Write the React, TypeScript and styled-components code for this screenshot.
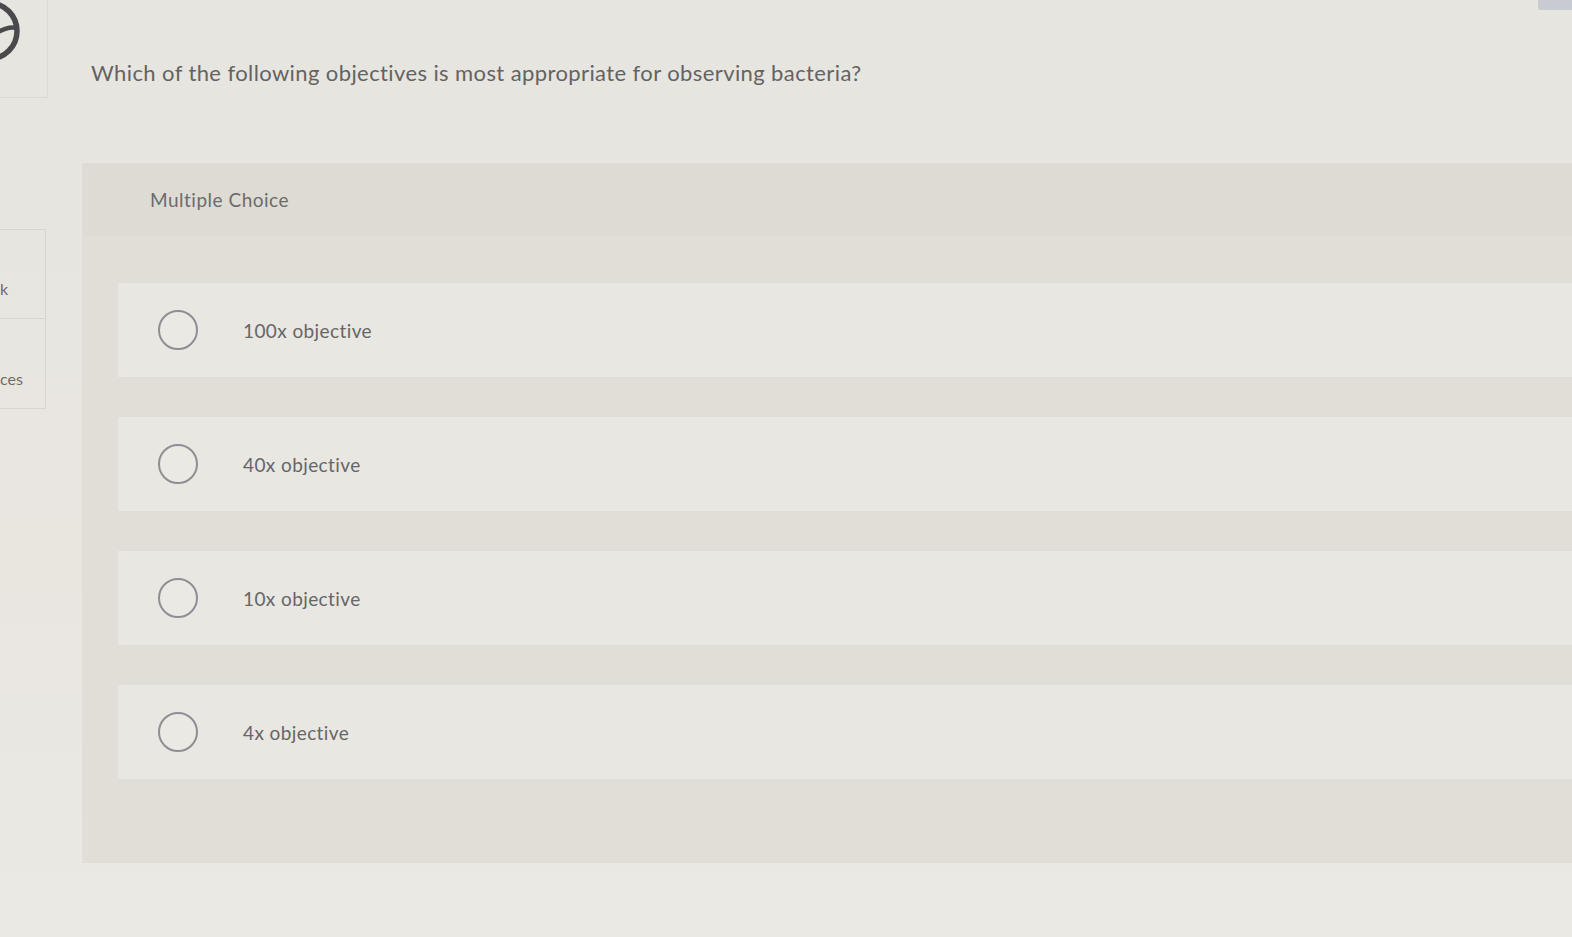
import styled, { createGlobalStyle } from "styled-components";

const GlobalStyle = createGlobalStyle`
  html, body {
    margin: 0;
    padding: 0;
    background: #e8e6e0;
    font-family: Lato, "Open Sans", "Liberation Sans", sans-serif;
    color: #6a6a6a;
  }
`;

const Page = styled.div`
  width: 1572px;
  height: 937px;
  display: flex;
  overflow: hidden;
  background: linear-gradient(180deg, #e7e5df 0%, #e9e6e0 60%, #ebe9e3 100%);
`;

const Sidebar = styled.aside`
  width: 48px;
  flex-shrink: 0;
  display: flex;
  flex-direction: column;
`;

const IconCard = styled.div`
  height: 97px;
  border-right: 1px solid #dcd9d2;
  border-bottom: 1px solid #dcd9d2;
  display: flex;
  align-items: flex-start;
`;

const NavGroup = styled.div`
  margin-top: 131px;
  width: 45px;
  border: 1px solid #d8d5ce;
  border-left: none;
  display: flex;
  flex-direction: column;
`;

const NavItem = styled.div<{ $last?: boolean }>`
  height: 89px;
  display: flex;
  align-items: flex-end;
  padding-bottom: 20px;
  box-sizing: border-box;
  font-size: 16px;
  color: #6c6c6c;
  border-bottom: ${(p) => (p.$last ? "none" : "1px solid #d8d5ce")};
`;

const Main = styled.main`
  flex: 1;
  display: flex;
  flex-direction: column;
`;

const Question = styled.h1`
  margin: 59px 0 0 43px;
  font-size: 22px;
  font-weight: 400;
  color: #636363;
  letter-spacing: 0.4px;
`;

const Panel = styled.section`
  margin: 77px 0 0 34px;
  height: 700px;
  background: #e1ded7;
  display: flex;
  flex-direction: column;
`;

const PanelHeader = styled.div`
  height: 73px;
  padding-left: 68px;
  display: flex;
  align-items: center;
  font-size: 19px;
  letter-spacing: 0.5px;
  color: #6b6b6b;
  background: #dedbd4;
`;

const Options = styled.div`
  display: flex;
  flex-direction: column;
  gap: 40px;
  padding: 47px 0 0 36px;
`;

const Option = styled.label`
  height: 94px;
  display: flex;
  align-items: center;
  background: #e9e7e1;
  cursor: pointer;
`;

const Radio = styled.span`
  width: 36px;
  height: 36px;
  margin-left: 40px;
  border-radius: 50%;
  border: 2px solid #8f8e95;
  background: #ebe9e3;
  flex-shrink: 0;
`;

const OptionText = styled.span`
  margin-left: 45px;
  font-size: 19px;
  letter-spacing: 0.4px;
  color: #666;
`;

const Corner = styled.div`
  position: absolute;
  top: 0;
  right: 0;
  width: 34px;
  height: 10px;
  background: #c9cbd2;
  border-bottom-left-radius: 3px;
`;

const options = ["100x objective", "40x objective", "10x objective", "4x objective"];

const App = () => {
  return (
    <>
      <GlobalStyle />
      <Page>
        <Sidebar>
          <IconCard>
            <svg width="24" height="64" viewBox="0 0 24 64">
              <circle cx="-11" cy="31" r="28" fill="none" stroke="#4a4a4c" strokeWidth="5.5" />
              <path d="M-12 37 C0 31 8 26 17 28" fill="none" stroke="#4a4a4c" strokeWidth="4.5" />
            </svg>
          </IconCard>
          <NavGroup>
            <NavItem>k</NavItem>
            <NavItem $last>ces</NavItem>
          </NavGroup>
        </Sidebar>
        <Main>
          <Question>Which of the following objectives is most appropriate for observing bacteria?</Question>
          <Panel>
            <PanelHeader>Multiple Choice</PanelHeader>
            <Options>
              {options.map((o) => (
                <Option key={o}>
                  <Radio />
                  <OptionText>{o}</OptionText>
                </Option>
              ))}
            </Options>
          </Panel>
        </Main>
        <Corner />
      </Page>
    </>
  );
};

export default App;
